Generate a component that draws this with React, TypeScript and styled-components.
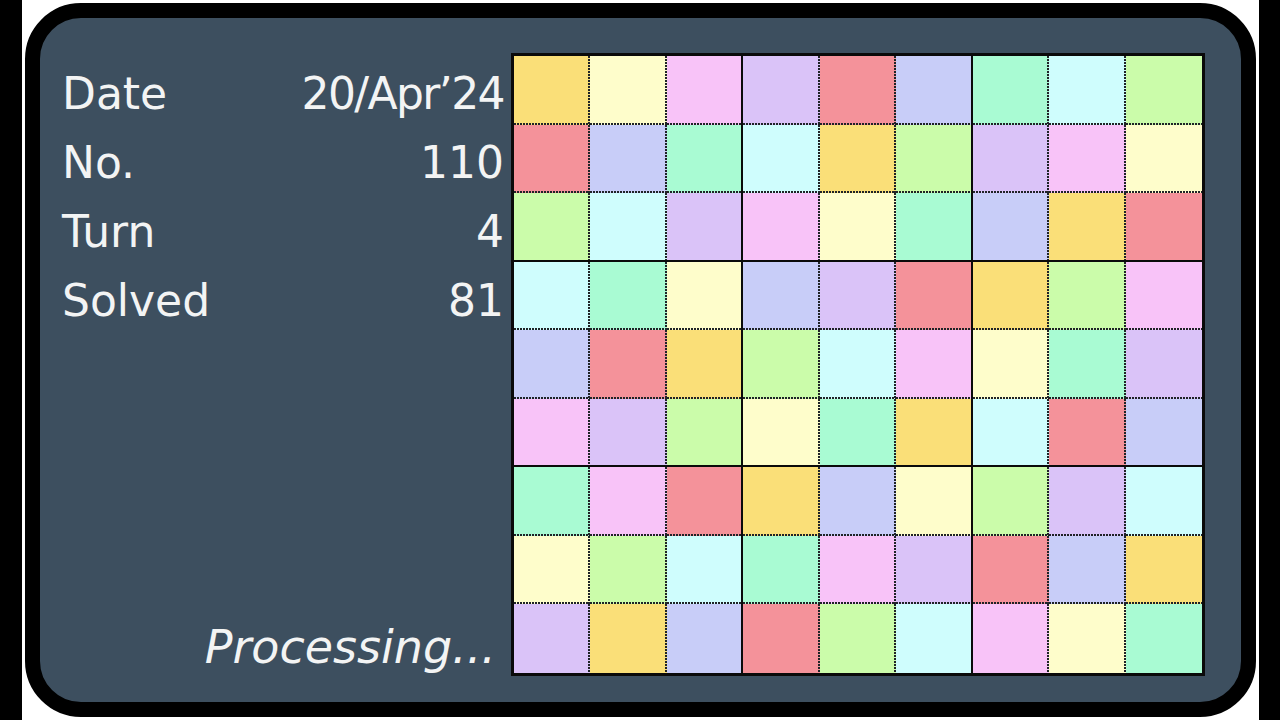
import React from "react";
import styled, { createGlobalStyle, css } from "styled-components";

const GlobalStyle = createGlobalStyle`
  html, body {
    margin: 0;
    padding: 0;
    background: #ffffff;
  }
  body {
    font-family: "DejaVu Sans", "Liberation Sans", sans-serif;
  }
`;

const Screen = styled.div`
  display: flex;
  width: 1280px;
  height: 720px;
  background: #ffffff;
  overflow: hidden;
`;

const SideBar = styled.div<{ $w: number }>`
  width: ${(p) => p.$w}px;
  flex: 0 0 auto;
  background: #000;
`;

const Stage = styled.div`
  flex: 1;
  display: flex;
  padding: 3px;
  box-sizing: border-box;
`;

const Card = styled.div`
  flex: 1;
  display: flex;
  gap: 7px;
  box-sizing: border-box;
  border: 15px solid #000;
  border-radius: 56px;
  background: #3d4f5f;
  padding: 35px 36px 26px 22px;
`;

const SideColumn = styled.div`
  width: 442px;
  display: flex;
  flex-direction: column;
  justify-content: space-between;
  color: #f3f4f4;
`;

const InfoList = styled.div`
  margin-top: 6px;
  display: grid;
  grid-template-columns: auto 1fr;
  grid-auto-rows: 69px;
  font-size: 44px;
  line-height: 69px;
`;

const Label = styled.div`
  text-align: left;
  white-space: nowrap;
`;

const Value = styled.div<{ $tight?: boolean }>`
  text-align: right;
  white-space: nowrap;
  letter-spacing: ${(p) => (p.$tight ? "-1.6px" : "0")};
`;

const Status = styled.div`
  font-size: 46px;
  line-height: 58px;
  font-style: italic;
  text-align: right;
  padding-right: 8px;
  white-space: nowrap;
`;

const Board = styled.div`
  width: 694px;
  height: 623px;
  box-sizing: border-box;
  border: 3px solid #0a0a0a;
  display: grid;
  grid-template-columns: repeat(9, 1fr);
  grid-template-rows: repeat(9, 1fr);
`;

type Edge = "none" | "thin" | "thick";

const dotV = "repeating-linear-gradient(to bottom, #1f2327 0 2px, transparent 2px 3px)";
const dotH = "repeating-linear-gradient(to right, #1f2327 0 2px, transparent 2px 3px)";

const Cell = styled.div<{ $bg: string; $right: Edge; $bottom: Edge }>`
  box-sizing: border-box;
  background-color: ${(p) => p.$bg};
  background-repeat: no-repeat;
  ${(p) => {
    const imgs: string[] = [];
    const pos: string[] = [];
    const size: string[] = [];
    if (p.$right === "thin") {
      imgs.push(dotV);
      pos.push("right top");
      size.push("2px 100%");
    }
    if (p.$bottom === "thin") {
      imgs.push(dotH);
      pos.push("left bottom");
      size.push("100% 2px");
    }
    return imgs.length
      ? css`
          background-image: ${imgs.join(", ")};
          background-position: ${pos.join(", ")};
          background-size: ${size.join(", ")};
        `
      : "";
  }}
  border-right: ${(p) => (p.$right === "thick" ? "2px solid #0a0a0a" : "none")};
  border-bottom: ${(p) => (p.$bottom === "thick" ? "2px solid #0a0a0a" : "none")};
`;

const palette: Record<string, string> = {
  Y: "#fadf78",
  W: "#fefdcb",
  P: "#f8c3f8",
  L: "#dac3f8",
  R: "#f4929a",
  B: "#c8cdf8",
  M: "#a9fbd3",
  C: "#cffdfd",
  G: "#cbfcaa",
};

const rows = [
  "YWPLRBMCG",
  "RBMCYGLPW",
  "GCLPWMBYR",
  "CMWBLRYGP",
  "BRYGCPWML",
  "PLGWMYCRB",
  "MPRYBWGLC",
  "WGCMPLRBY",
  "LYBRGCPWM",
];

const info: [string, string, boolean][] = [
  ["Date", "20/Apr\u201924", true],
  ["No.", "110", false],
  ["Turn", "4", false],
  ["Solved", "81", false],
];

export default function App() {
  return (
    <>
      <GlobalStyle />
      <Screen>
        <SideBar $w={22} />
        <Stage>
          <Card>
            <SideColumn>
              <InfoList>
                {info.map(([k, v, tight]) => (
                  <React.Fragment key={k}>
                    <Label>{k}</Label>
                    <Value $tight={tight}>{v}</Value>
                  </React.Fragment>
                ))}
              </InfoList>
              <Status>Processing...</Status>
            </SideColumn>
            <Board>
              {rows.map((row, r) =>
                row.split("").map((c, col) => (
                  <Cell
                    key={`${r}-${col}`}
                    $bg={palette[c]}
                    $right={col === 8 ? "none" : col === 2 || col === 5 ? "thick" : "thin"}
                    $bottom={r === 8 ? "none" : r === 2 || r === 5 ? "thick" : "thin"}
                  />
                ))
              )}
            </Board>
          </Card>
        </Stage>
        <SideBar $w={21} />
      </Screen>
    </>
  );
}
